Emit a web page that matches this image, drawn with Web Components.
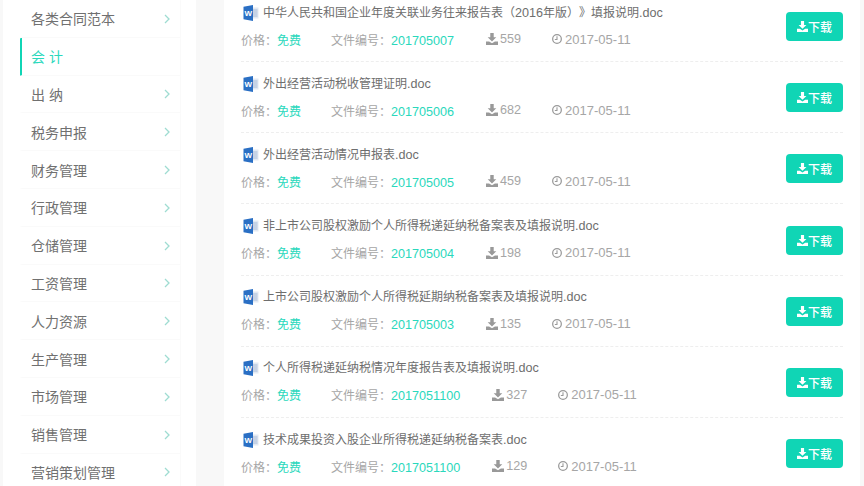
<!DOCTYPE html>
<html lang="zh-CN">
<head>
<meta charset="utf-8">
<title>文档下载</title>
<style>
  html, body { margin: 0; height: 486px; overflow: hidden; background: #f8f8f8; }
  body { font-family: "Liberation Sans", "Noto Sans CJK SC", sans-serif; }
</style>
</head>
<body>
<doc-page>
  <side-menu slot="side">
    <menu-item label="各类合同范本"></menu-item>
    <menu-item label="会 计" active></menu-item>
    <menu-item label="出 纳"></menu-item>
    <menu-item label="税务申报"></menu-item>
    <menu-item label="财务管理"></menu-item>
    <menu-item label="行政管理"></menu-item>
    <menu-item label="仓储管理"></menu-item>
    <menu-item label="工资管理"></menu-item>
    <menu-item label="人力资源"></menu-item>
    <menu-item label="生产管理"></menu-item>
    <menu-item label="市场管理"></menu-item>
    <menu-item label="销售管理"></menu-item>
    <menu-item label="营销策划管理"></menu-item>
  </side-menu>
  <doc-row title-text="中华人民共和国企业年度关联业务往来报告表（2016年版）》填报说明.doc" code="201705007" count="559" date="2017-05-11"></doc-row>
  <doc-row title-text="外出经营活动税收管理证明.doc" code="201705006" count="682" date="2017-05-11"></doc-row>
  <doc-row title-text="外出经营活动情况申报表.doc" code="201705005" count="459" date="2017-05-11"></doc-row>
  <doc-row title-text="非上市公司股权激励个人所得税递延纳税备案表及填报说明.doc" code="201705004" count="198" date="2017-05-11"></doc-row>
  <doc-row title-text="上市公司股权激励个人所得税延期纳税备案表及填报说明.doc" code="201705003" count="135" date="2017-05-11"></doc-row>
  <doc-row title-text="个人所得税递延纳税情况年度报告表及填报说明.doc" code="2017051100" count="327" date="2017-05-11"></doc-row>
  <doc-row title-text="技术成果投资入股企业所得税递延纳税备案表.doc" code="2017051100" count="129" date="2017-05-11"></doc-row>
</doc-page>

<script>
// 数字和字母比中文略大一点
function wrapLatin(text) {
    return text.replace(/[0-9a-z.\-]+/g, m => `<span class="latin">${m}</span>`);
}

const DOWNLOAD_ICON = `<svg viewBox="0 0 14 14" width="12" height="12"><path fill="currentColor" d="M5 0h4v5h3L7 10 2 5h3zM0 10h3.6L7 12l3.4-2H14v4H0z"/></svg>`;
const CLOCK_ICON = `<svg viewBox="1 1 12 12" width="10" height="10"><circle cx="7" cy="7" r="5.2" fill="none" stroke="currentColor" stroke-width="1.5"/><path d="M7 3.6V7.6H4.4" fill="none" stroke="currentColor" stroke-width="1.3"/></svg>`;
const WORD_ICON = `<svg viewBox="0 0 16 16" width="16" height="16">
    <rect x="6" y="2.5" width="9.5" height="11" fill="#e3e9f2"/>
    <path d="M9.5 5h5M9.5 7h5M9.5 9h5M9.5 11h5" stroke="#a9bcd8" stroke-width="1"/>
    <path d="M0.5 1.8 10 0v16L0.5 14.2z" fill="#2a6fc4"/>
    <text x="5.2" y="11" font-size="8" font-weight="700" text-anchor="middle" fill="#fff" font-family="Liberation Sans, sans-serif">W</text>
</svg>`;

class DocPage extends HTMLElement {
    constructor() {
        super();
        this.attachShadow({ mode: 'open' });
        this.shadowRoot.innerHTML = `
            <style>
                :host { display: flex; height: 486px; width: 864px; overflow: hidden; padding-left: 3px; box-sizing: border-box; }
                .side { width: 193px; flex: none; background: #fff; padding-left: 17px; box-sizing: border-box; }
                .main { width: 636px; flex: none; margin-left: 28px; background: #fff; padding: 0 17px 0 17px; box-sizing: border-box; }
            </style>
            <div class="side"><slot name="side"></slot></div>
            <div class="main"><slot></slot></div>
        `;
    }
}

class SideMenu extends HTMLElement {
    constructor() {
        super();
        this.attachShadow({ mode: 'open' });
        this.shadowRoot.innerHTML = `
            <style>
                :host { display: block; width: 161px; }
            </style>
            <slot></slot>
        `;
    }
}

class MenuItem extends HTMLElement {
    constructor() {
        super();
        this.attachShadow({ mode: 'open' });
    }

    connectedCallback() {
        const active = this.hasAttribute('active');
        this.shadowRoot.innerHTML = `
            <style>
                :host {
                    display: flex;
                    align-items: center;
                    justify-content: space-between;
                    height: 37.8px;
                    box-sizing: border-box;
                    padding: 0 10px;
                    border: 1px solid #fafafa;
                    border-top: none;
                    border-left: 2px solid ${active ? '#10d5b5' : '#fff'};
                    color: ${active ? '#2ad8bc' : '#707070'};
                    font-size: 14px;
                    padding-left: 9px;
                    border-radius: 1px;
                }
                svg { display: block; margin-top: 1px; }
            </style>
            <span>${this.getAttribute('label')}</span>
            ${active ? '' : `<svg width="6" height="10" viewBox="0 0 6 10"><path d="M1 1l4 4-4 4" fill="none" stroke="#9fdcd2" stroke-width="1.3"/></svg>`}
        `;
    }
}

class DocRow extends HTMLElement {
    constructor() {
        super();
        this.attachShadow({ mode: 'open' });
    }

    connectedCallback() {
        const title = this.getAttribute('title-text');
        const code = this.getAttribute('code');
        const count = this.getAttribute('count');
        const date = this.getAttribute('date');
        this.shadowRoot.innerHTML = `
            <style>
                :host {
                    display: flex;
                    justify-content: space-between;
                    height: 62px;
                    margin-bottom: 9.2px;
                    box-sizing: border-box;
                    border-bottom: 1px dashed #eee;
                    font-size: 12px;
                    color: #a6a6a6;
                    text-spacing-trim: space-all;
                }
                .latin { font-size: 12.6px; }
                .title { display: flex; align-items: center; gap: 4px; height: 20px; margin-top: 1px; padding-left: 2px; color: #6e6e6e; }
                .title svg { flex: none; margin-top: 3px; }
                .meta { display: flex; gap: 30px; height: 20px; margin-top: 8px; align-items: center; }
                .meta > span { display: flex; align-items: center; gap: 2px; white-space: pre; }
                .free, .code { color: #2ad8bc; }
                .meta svg { color: #999; }
                .meta .count { margin-left: 2px; }
                .meta .when { gap: 3px; margin-left: 1px; }
                .meta .when .latin { font-size: 13px; }
                .btn {
                    display: flex;
                    align-items: center;
                    justify-content: center;
                    flex: none;
                    width: 57px;
                    height: 29px;
                    margin-top: 12px;
                    border-radius: 4px;
                    background: #10d5b5;
                    color: #fff;
                    font-weight: 500;
                }
                .btn svg { width: 11px; height: 11px; }
            </style>
            <div>
                <div class="title">${WORD_ICON}<span>${wrapLatin(title)}</span></div>
                <div class="meta">
                    <span><span>价格：<span class="free">免费</span></span></span>
                    <span><span>文件编号：<span class="code latin">${code}</span></span></span>
                    <span class="count">${DOWNLOAD_ICON}<span class="latin">${count}</span></span>
                    <span class="when">${CLOCK_ICON}<span class="latin">${date}</span></span>
                </div>
            </div>
            <div class="btn">${DOWNLOAD_ICON}<span>下载</span></div>
        `;
    }
}

customElements.define('doc-page', DocPage);
customElements.define('side-menu', SideMenu);
customElements.define('menu-item', MenuItem);
customElements.define('doc-row', DocRow);
</script>
</body>
</html>
